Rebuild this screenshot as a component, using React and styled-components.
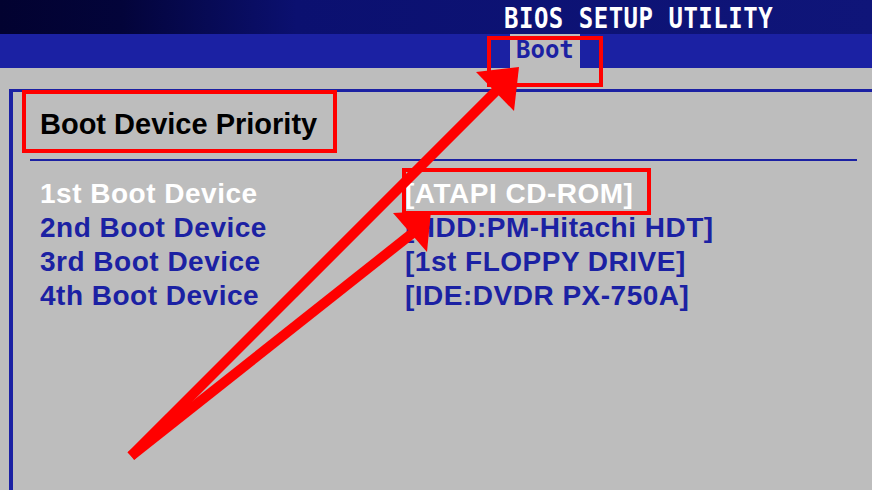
import { Fragment } from "react";
import styled, { createGlobalStyle } from "styled-components";

const GlobalStyle = createGlobalStyle`
  html, body {
    margin: 0;
    padding: 0;
    background: #bdbdbd;
    overflow: hidden;
  }
  #root {
    width: 872px;
    height: 490px;
  }
`;

const blue = "#1b21a3";

const Screen = styled.div`
  position: relative;
  width: 872px;
  height: 490px;
  display: flex;
  flex-direction: column;
  background: #bdbdbd;
  font-family: "Liberation Sans", Arial, sans-serif;
  overflow: hidden;
`;

const TitleBar = styled.div`
  height: 34px;
  padding-left: 504px;
  background: linear-gradient(90deg, #020230 0%, #03043a 14%, #0b1070 34%, #0f1579 100%);
  box-sizing: border-box;
`;

const Title = styled.span`
  display: inline-block;
  margin-top: 3.6px;
  font-family: "DejaVu Sans Mono", monospace;
  font-weight: bold;
  font-size: 24px;
  line-height: 24px;
  letter-spacing: 0.5px;
  color: #ffffff;
  transform: scaleY(1.2);
  transform-origin: 0 0;
  white-space: nowrap;
`;

const TabBar = styled.div`
  height: 34px;
  display: flex;
  padding-left: 510px;
  background: ${blue};
`;

const Tab = styled.div`
  height: 34px;
  padding: 0 6px;
  background: ${({ $active }) => ($active ? "#bdbdbd" : "transparent")};
  color: ${({ $active }) => ($active ? blue : "#ffffff")};
  font-family: "DejaVu Sans Mono", monospace;
  font-size: 24px;
  font-weight: bold;
  line-height: 32px;
`;

const Panel = styled.div`
  flex: 1;
  margin: 21px 0 0 9px;
  border-top: 3px solid ${blue};
  border-left: 4px solid ${blue};
  display: flex;
  flex-direction: column;
`;

const Heading = styled.div`
  padding: 12px 0 0 27px;
  font-size: 29px;
  font-weight: bold;
  line-height: 40px;
  color: #000000;
`;

const Rule = styled.div`
  height: 2px;
  margin: 15px 15px 0 17px;
  background: ${blue};
`;

const List = styled.div`
  margin-top: 16px;
  padding-left: 27px;
  display: grid;
  grid-template-columns: 365px 1fr;
  grid-auto-rows: 34px;
`;

const Cell = styled.div`
  font-size: 28px;
  font-weight: bold;
  line-height: 34px;
  letter-spacing: 0.5px;
  white-space: nowrap;
  color: ${({ $selected }) => ($selected ? "#ffffff" : blue)};
`;

const Overlay = styled.svg`
  position: absolute;
  left: 0;
  top: 0;
  pointer-events: none;
`;

const devices = [
  ["1st Boot Device", "[ATAPI CD-ROM]"],
  ["2nd Boot Device", "[HDD:PM-Hitachi HDT]"],
  ["3rd Boot Device", "[1st FLOPPY DRIVE]"],
  ["4th Boot Device", "[IDE:DVDR PX-750A]"],
];

const Annotations = () => (
  <Overlay width="872" height="490" viewBox="0 0 872 490">
    <g fill="none" stroke="#ff0000" strokeWidth="4">
      <rect x="489" y="38" width="112" height="47" />
      <rect x="24" y="92" width="311" height="59" />
      <rect x="404" y="170" width="245" height="43" />
    </g>
    <g stroke="#ff0000" strokeWidth="10">
      <line x1="131" y1="456" x2="500" y2="87" />
      <line x1="131" y1="456" x2="414" y2="232" />
    </g>
    <g fill="#ff0000">
      <polygon points="476,72 519,67 514,111" />
      <polygon points="393,213 431,211 427,252" />
    </g>
  </Overlay>
);

export default function App() {
  return (
    <Screen>
      <GlobalStyle />
      <TitleBar>
        <Title>BIOS SETUP UTILITY</Title>
      </TitleBar>
      <TabBar>
        <Tab $active>Boot</Tab>
      </TabBar>
      <Panel>
        <Heading>Boot Device Priority</Heading>
        <Rule />
        <List>
          {devices.map(([label, value], i) => (
            <Fragment key={label}>
              <Cell $selected={i === 0}>{label}</Cell>
              <Cell $selected={i === 0}>{value}</Cell>
            </Fragment>
          ))}
        </List>
      </Panel>
      <Annotations />
    </Screen>
  );
}
